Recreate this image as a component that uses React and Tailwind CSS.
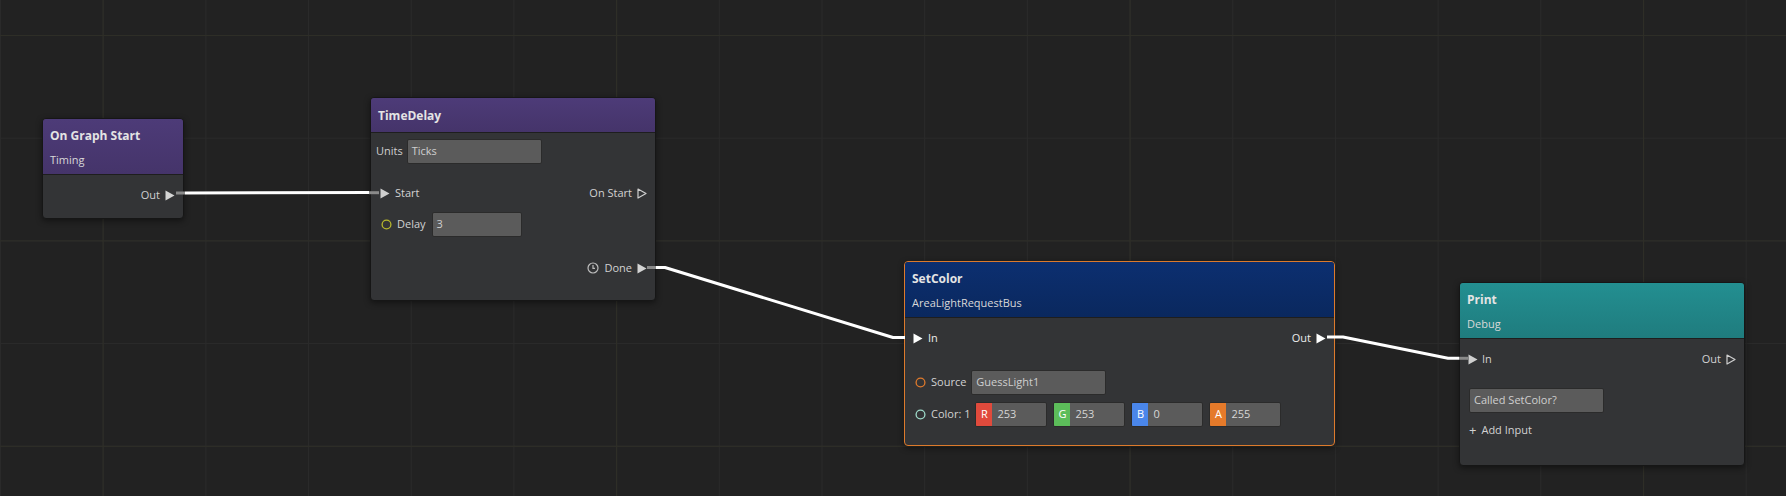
import React from "react";

const font = { fontFamily: '"Open Sans", "Noto Sans", sans-serif' };

const Tri = ({ filled = true, color = "#d6d6d6" }) => (
  <svg width="10" height="11" viewBox="0 0 10 11" className="shrink-0">
    {filled ? (
      <path d="M0.5 0.5 L9.5 5.5 L0.5 10.5 Z" fill={color} />
    ) : (
      <path d="M1 1 L9 5.5 L1 10 Z" fill="none" stroke={color} strokeWidth="1.2" strokeLinejoin="round" />
    )}
  </svg>
);

const Ring = ({ color }) => (
  <svg width="11" height="11" viewBox="0 0 11 11" className="shrink-0">
    <circle cx="5.5" cy="5.5" r="4.4" fill="none" stroke={color} strokeWidth="1.3" />
  </svg>
);

const Clock = () => (
  <svg width="12" height="12" viewBox="0 0 12 12" className="shrink-0">
    <circle cx="6" cy="6" r="5" fill="none" stroke="#bdbdbd" strokeWidth="1.2" />
    <path d="M6 3 V6.3 H8" fill="none" stroke="#bdbdbd" strokeWidth="1.2" />
  </svg>
);

const Field = ({ value, w }) => (
  <div
    className="h-[25px] rounded-[2px] border border-[#2b2b2b] bg-[#5b5b5b] pl-[4px] flex items-center text-[11px] text-[#cfcfcf]"
    style={{ width: w }}
  >
    {value}
  </div>
);

const ColorField = ({ letter, value, badge }) => (
  <div className="h-[25px] w-[72px] rounded-[2px] border border-[#2b2b2b] bg-[#5b5b5b] flex items-center overflow-hidden text-[11px]">
    <div className={`h-full w-[16px] flex items-center justify-center text-white ${badge}`}>{letter}</div>
    <span className="pl-[5px] text-[#d6d6d6]">{value}</span>
  </div>
);

const Header = ({ title, subtitle, bg }) => (
  <div className={`px-[7px] ${subtitle ? "pt-[9px] pb-[7px] h-[56px]" : "pt-[10px] pb-[9px] h-[35px]"} ${bg} border-b border-[#1e1e1e] rounded-t-[3px]`}>
    <div className="text-[12px] font-bold leading-[16px] text-[#e4e4e4]">{title}</div>
    {subtitle && <div className="mt-[8px] text-[11px] leading-[16px] text-[#d8d8d8]">{subtitle}</div>}
  </div>
);

const Node = ({ left, top, w, h, border = "border-[#161616]", children }) => (
  <div
    className={`absolute flex flex-col rounded-[4px] border ${border} bg-[#333436] shadow-[0_2px_6px_rgba(0,0,0,0.45)]`}
    style={{ left, top, width: w, height: h }}
  >
    {children}
  </div>
);

const Wires = () => (
  <svg className="absolute inset-0 pointer-events-none" width="1786" height="496">
    <g fill="none" strokeWidth="3" strokeLinejoin="round">
      <path d="M176 193 H185" stroke="#8a8a8a" />
      <path d="M185 193 L369 192.5" stroke="#ffffff" />
      <path d="M369 192.7 H379" stroke="#8a8a8a" />

      <path d="M647 267.5 H656" stroke="#8a8a8a" />
      <path d="M656 267.5 H665 L893 337.5 H905" stroke="#ffffff" />

      <path d="M1327 337 H1343 L1448 358.3 H1459" stroke="#ffffff" />
      <path d="M1459 358.3 H1468" stroke="#8a8a8a" />
    </g>
  </svg>
);

export default function App() {
  return (
    <div
      className="relative w-full h-[496px] overflow-hidden bg-[#222222] text-[#d2d2d2]"
      style={font}
    >
      {/* grid */}
      <div className="absolute inset-0 [background-image:linear-gradient(to_right,#2a2a2a_1px,transparent_1px),linear-gradient(to_bottom,#2a2a2a_1px,transparent_1px)] [background-size:102.7px_102.7px] [background-position:0px_35px]" />
      <div className="absolute inset-0 [background-image:linear-gradient(to_bottom,#2e2e27_1px,transparent_1px)] [background-size:100%_205.4px] [background-position:0px_35px]" />
      <div className="absolute inset-0 [background-image:linear-gradient(to_right,#2e2e27_1px,transparent_1px)] [background-size:513.5px_100%] [background-position:102.6px_0px]" />

      {/* On Graph Start */}
      <Node left={42} top={118} w={142} h={101}>
        <Header title="On Graph Start" subtitle="Timing" bg="bg-linear-to-b from-[#4d3b78] to-[#45346a]" />
        <div className="mt-[10px] h-5 pr-[8px] flex items-center justify-end gap-[5px] text-[11px] text-[#d0d0d0]">
          <span>Out</span>
          <Tri color="#d4d4d4" />
        </div>
      </Node>

      {/* TimeDelay */}
      <Node left={370} top={97} w={286} h={204}>
        <Header title="TimeDelay" bg="bg-linear-to-b from-[#4d3b78] to-[#45346a]" />
        <div className="mt-[6px] pl-[5px] flex items-center gap-[4px] text-[11px]">
          <span className="text-[#cfcfcf]">Units</span>
          <Field value="Ticks" w={135} />
        </div>
        <div className="mt-[19px] h-5 pl-[9px] pr-[8px] flex items-center justify-between text-[11px]">
          <div className="flex items-center gap-[5px]">
            <Tri color="#cfcfcf" />
            <span>Start</span>
          </div>
          <div className="flex items-center gap-[5px]">
            <span>On Start</span>
            <Tri filled={false} color="#cfcfcf" />
          </div>
        </div>
        <div className="mt-[9px] pl-[10px] flex items-center text-[11px]">
          <Ring color="#b8b82c" />
          <span className="ml-[5px] mr-[6px]">Delay</span>
          <Field value="3" w={90} />
        </div>
        <div className="mt-[21px] h-5 pr-[8px] flex items-center justify-end text-[11px]">
          <Clock />
          <span className="ml-[5px] mr-[5px]">Done</span>
          <Tri color="#d4d4d4" />
        </div>
      </Node>

      {/* SetColor */}
      <Node left={904} top={261} w={431} h={185} border="border-[#dd7a2c]">
        <Header title="SetColor" subtitle="AreaLightRequestBus" bg="bg-linear-to-b from-[#0c2f70] to-[#0a285e]" />
        <div className="mt-[10px] h-5 pl-[8px] pr-[8px] flex items-center justify-between text-[11px] text-[#ececec]">
          <div className="flex items-center gap-[5px]">
            <Tri color="#ffffff" />
            <span>In</span>
          </div>
          <div className="flex items-center gap-[5px]">
            <span>Out</span>
            <Tri color="#ffffff" />
          </div>
        </div>
        <div className="mt-[22px] pl-[10px] flex items-center text-[11px]">
          <Ring color="#e07a2c" />
          <span className="ml-[5px] mr-[5px]">Source</span>
          <Field value="GuessLight1" w={135} />
        </div>
        <div className="mt-[7px] pl-[10px] flex items-center text-[11px]">
          <Ring color="#9fdccb" />
          <span className="ml-[5px] mr-[5px]">Color: 1</span>
          <div className="flex items-center gap-[6px]">
            <ColorField letter="R" value="253" badge="bg-[#e04a3c]" />
            <ColorField letter="G" value="253" badge="bg-[#5cbd5a]" />
            <ColorField letter="B" value="0" badge="bg-[#4a86ea]" />
            <ColorField letter="A" value="255" badge="bg-[#e57a2a]" />
          </div>
        </div>
      </Node>

      {/* Print */}
      <Node left={1459} top={282} w={286} h={184}>
        <Header title="Print" subtitle="Debug" bg="bg-linear-to-b from-[#238f91] to-[#1f7c7e]" />
        <div className="mt-[10px] h-5 pl-[8px] pr-[8px] flex items-center justify-between text-[11px]">
          <div className="flex items-center gap-[4px]">
            <Tri color="#cfcfcf" />
            <span>In</span>
          </div>
          <div className="flex items-center gap-[5px]">
            <span>Out</span>
            <Tri filled={false} color="#cfcfcf" />
          </div>
        </div>
        <div className="mt-[19px] pl-[9px]">
          <Field value="Called SetColor?" w={135} />
        </div>
        <div className="mt-[7px] h-5 pl-[9px] flex items-center gap-[5px] text-[11px]">
          <span className="text-[13px] leading-none">+</span>
          <span>Add Input</span>
        </div>
      </Node>

      <Wires />
    </div>
  );
}
